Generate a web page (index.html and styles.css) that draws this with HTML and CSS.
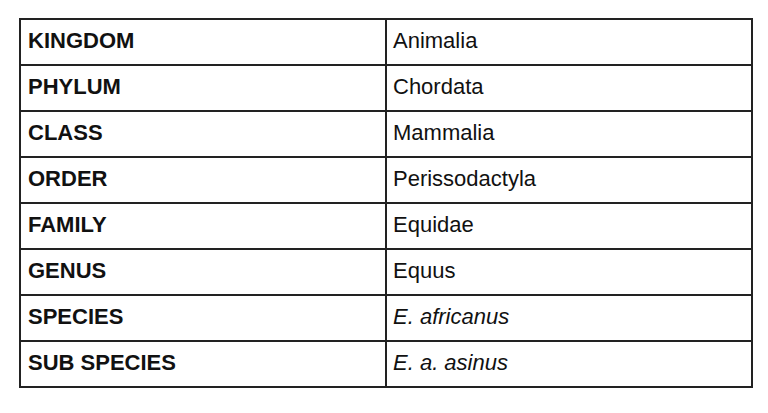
FILE: index.html
```html
<!DOCTYPE html>
<html>
<head>
<meta charset="utf-8">
<link rel="stylesheet" href="styles.css">
</head>
<body>
<div class="page">
<table class="taxo">
<tr><td class="k">KINGDOM</td><td class="v">Animalia</td></tr>
<tr><td class="k">PHYLUM</td><td class="v">Chordata</td></tr>
<tr><td class="k">CLASS</td><td class="v">Mammalia</td></tr>
<tr><td class="k">ORDER</td><td class="v">Perissodactyla</td></tr>
<tr><td class="k">FAMILY</td><td class="v">Equidae</td></tr>
<tr><td class="k">GENUS</td><td class="v">Equus</td></tr>
<tr><td class="k">SPECIES</td><td class="v"><em>E. africanus</em></td></tr>
<tr><td class="k">SUB SPECIES</td><td class="v"><em>E. a. asinus</em></td></tr>
</table>
</div>
</body>
</html>
```
FILE: styles.css
```css
html, body {
  margin: 0;
  padding: 0;
  background: #fff;
}
.page {
  padding: 18px 0 0 19px;
}
.taxo {
  border-collapse: collapse;
  width: 734px;
  font-family: "Liberation Sans", Arial, sans-serif;
  font-size: 22px;
  color: #111;
}
.taxo td {
  border: 2px solid #222;
  height: 46px;
  padding: 0 7px 3px 7px;
  vertical-align: middle;
  box-sizing: border-box;
}
.taxo td.k {
  width: 366px;
  font-weight: bold;
}
.taxo td.v {
  padding-left: 6px;
}
```
